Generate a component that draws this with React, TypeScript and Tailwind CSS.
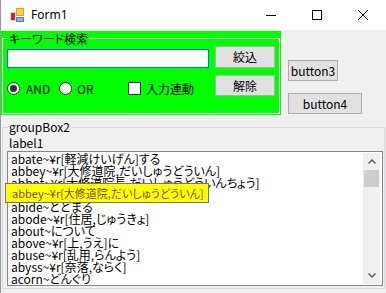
import React from "react";

const items = [
  "abate~¥r[軽減けいげん]する",
  "abbey~¥r[大修道院,だいしゅうどういん]",
  "abbot~¥r[大修道院長,だいしゅうどういんちょう]",
  "abbreviate~¥r[短縮,たんしゅく]する",
  "abide~とどまる",
  "abode~¥r[住居,じゅうきょ]",
  "about~について",
  "above~¥r[上,うえ]に",
  "abuse~¥r[乱用,らんよう]",
  "abyss~¥r[奈落,ならく]",
  "acorn~どんぐり",
];

function Btn({ label, className }: { label: string; className: string }) {
  return (
    <div
      className={`flex items-center justify-center bg-[#e1e1e1] border border-[#adadad] text-[12px] leading-[12px] text-black ${className}`}
    >
      {label}
    </div>
  );
}

function Radio({ checked }: { checked?: boolean }) {
  return (
    <div className="w-[13px] h-[13px] rounded-full border border-[#333333] bg-white flex items-center justify-center">
      {checked && <div className="w-[7px] h-[7px] rounded-full bg-[#333333]" />}
    </div>
  );
}

function Chevron({ up }: { up?: boolean }) {
  return (
    <svg width="8" height="5" viewBox="0 0 8 5">
      <path
        d={up ? "M0.5 4.5 L4 1 L7.5 4.5" : "M0.5 0.5 L4 4 L7.5 0.5"}
        fill="none"
        stroke="#606060"
        strokeWidth="1.5"
      />
    </svg>
  );
}

export default function App() {
  return (
    <div className="relative w-[386px] h-[293px] overflow-hidden bg-[#f0f0f0] flex flex-col border-l border-[#9a9a9a] font-['Noto_Sans_CJK_JP',sans-serif] [font-feature-settings:'palt'] text-black">
      {/* Title bar */}
      <div className="h-[30px] bg-white flex items-center shrink-0">
        <svg className="ml-[8px]" width="16" height="16" viewBox="0 0 16 16">
          <rect x="1" y="5" width="6" height="9" fill="#d9d9d9" />
          <rect x="2" y="6" width="4" height="7" fill="#c0272d" />
          <rect x="7" y="1" width="8" height="8" fill="#e8a317" />
          <rect x="8" y="2" width="6" height="6" fill="#fbd24b" />
          <rect x="7" y="10" width="8" height="5" fill="#4a7fd6" />
          <rect x="8" y="11" width="6" height="3" fill="#8fb4f0" />
        </svg>
        <span className="ml-[6px] text-[12px] font-['Noto_Sans',sans-serif] leading-[12px]">Form1</span>
        <div className="ml-auto flex">
          <div className="w-[46px] h-[30px] flex items-center justify-center">
            <div className="w-[10px] h-[1px] bg-black" />
          </div>
          <div className="w-[46px] h-[30px] flex items-center justify-center">
            <div className="w-[10px] h-[10px] border border-black" />
          </div>
          <div className="w-[46px] h-[30px] flex items-center justify-center">
            <svg width="10" height="10" viewBox="0 0 10 10">
              <path d="M0 0 L10 10 M10 0 L0 10" stroke="black" strokeWidth="1" />
            </svg>
          </div>
        </div>
      </div>

      {/* Top section */}
      <div className="flex h-[85px] shrink-0">
        <div className="mt-[1px] w-[280px] h-[84px] bg-[#00ff00] pt-[7px] px-[1px] pb-[1px]">
          <div className="relative h-[76px] border border-white pl-[4px] pt-[7px]">
            <span className="absolute left-[5px] -top-[7px] bg-[#00ff00] px-[1px] text-[12px] leading-[13px]">
              キーワード検索
            </span>
            <div className="flex items-start">
              <div className="mt-[3px] w-[202px] h-[19px] border border-[#0078d7] bg-white" />
              <Btn label="絞込" className="ml-[6px] w-[60px] h-[22px]" />
            </div>
            <div className="flex items-start mt-[7px]">
              <div className="w-[202px] flex items-center pt-[7px] text-[12px] leading-[13px]">
                <div className="w-[52px] flex items-center">
                  <Radio checked />
                  <span className="ml-[6px]">AND</span>
                </div>
                <div className="w-[69px] flex items-center">
                  <Radio />
                  <span className="ml-[5px]">OR</span>
                </div>
                <div className="flex items-center">
                  <div className="w-[13px] h-[13px] border border-[#333333] bg-white" />
                  <span className="ml-[5px]">入力連動</span>
                </div>
              </div>
              <Btn label="解除" className="ml-[6px] w-[60px] h-[21px]" />
            </div>
          </div>
        </div>
        <div className="ml-[7px] pt-[30px] flex flex-col items-start">
          <Btn label="button3" className="w-[50px] h-[21px]" />
          <Btn label="button4" className="mt-[12px] w-[74px] h-[21px]" />
        </div>
      </div>

      {/* groupBox2 */}
      <div className="relative mt-[12px] ml-[1px] mr-[1px] h-[162px] border border-[#dcdcdc] pl-[4px] pt-[8px]">
        <span className="absolute left-[5px] -top-[8px] bg-[#f0f0f0] px-[1px] text-[12px] leading-[13px]">
          groupBox2
        </span>
        <div className="pl-[2px] h-[13px] text-[12px] leading-[13px]">label1</div>
        <div className="mt-[2px] w-[376px] h-[135px] border border-[#828790] bg-white flex p-[1px]">
          <div className="flex-1 pl-[2px] overflow-hidden text-[12px]">
            {items.map((t) => (
              <div key={t} className="h-[12px] leading-[12px] whitespace-nowrap">
                {t}
              </div>
            ))}
          </div>
          <div className="w-[17px] mr-[1px] bg-[#f0f0f0] flex flex-col items-center">
            <div className="h-[17px] flex items-center justify-center">
              <Chevron up />
            </div>
            <div className="w-[15px] h-[17px] bg-[#cdcdcd]" />
            <div className="mt-auto h-[17px] flex items-center justify-center">
              <Chevron />
            </div>
          </div>
        </div>
      </div>

      {/* Tooltip */}
      <div className="absolute left-[4px] top-[183px] w-[204px] h-[20px] border border-[#767676] bg-[#ffff00] pl-[6px] flex items-center text-[11px] leading-[12px] text-[#7a4600] whitespace-nowrap">
        abbey~¥r[大修道院,だいしゅうどういん]
      </div>
    </div>
  );
}
